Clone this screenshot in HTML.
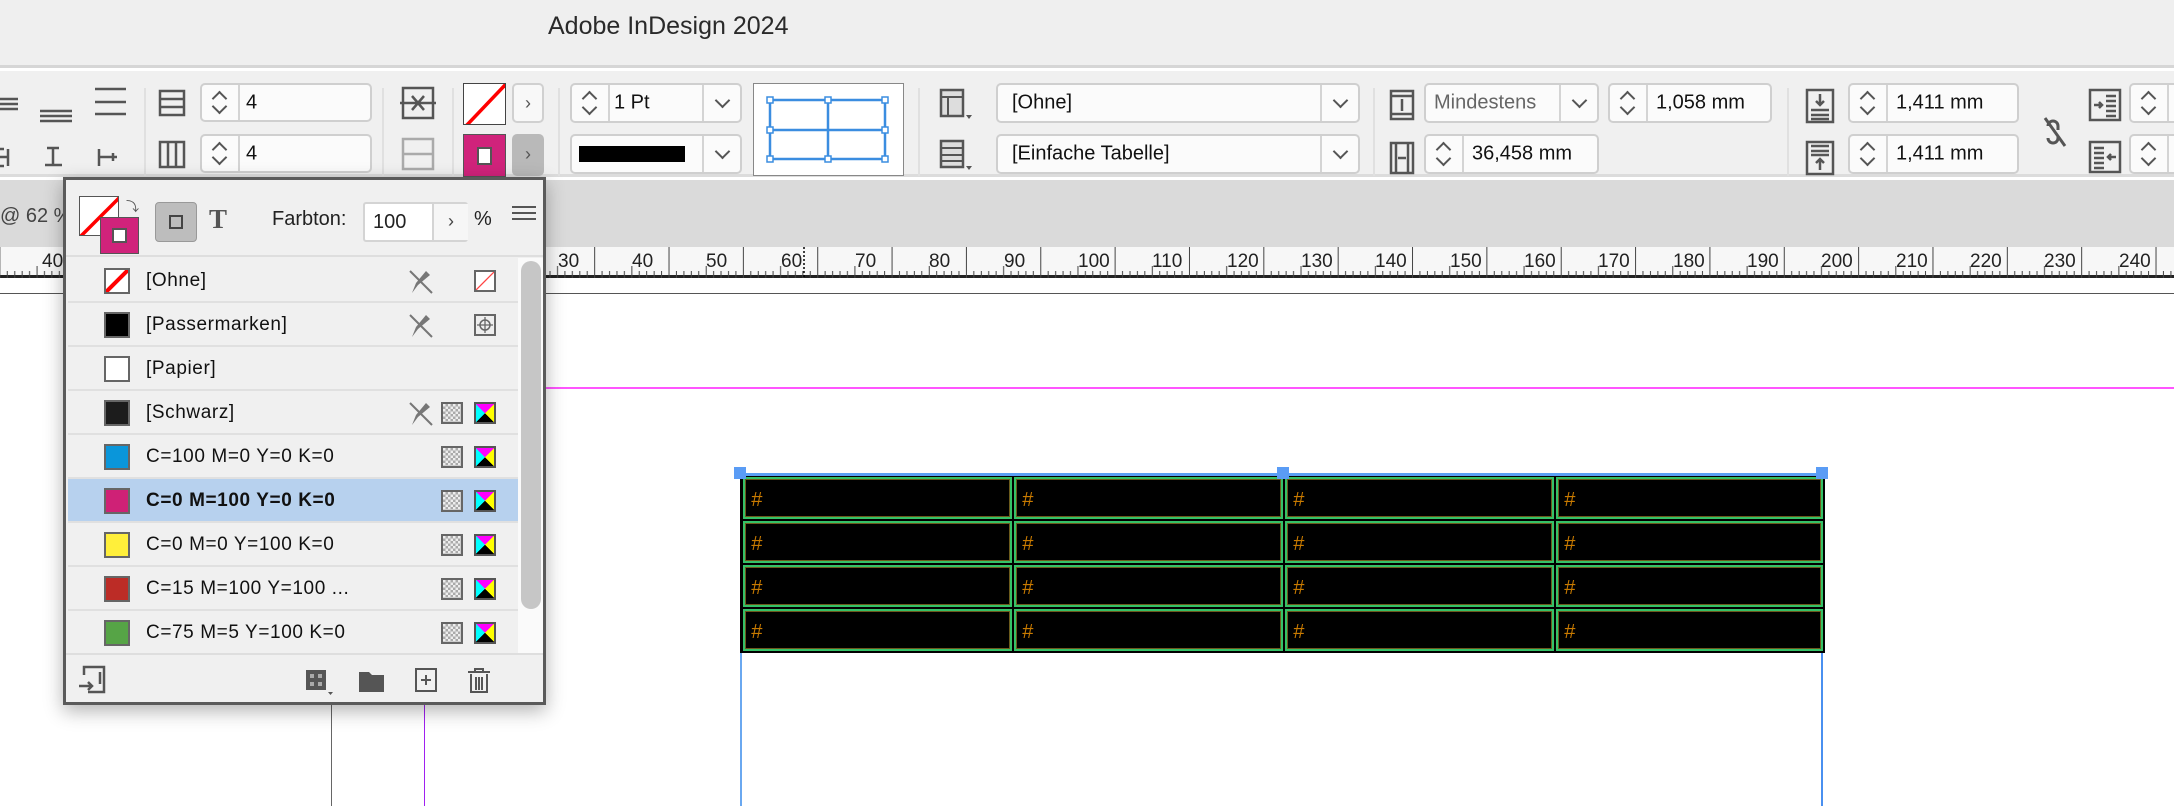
<!DOCTYPE html>
<html><head><meta charset="utf-8">
<style>
*{box-sizing:border-box;margin:0;padding:0}
body{width:2174px;height:806px;overflow:hidden;position:relative;background:#fff;font-family:"Liberation Sans",sans-serif;color:#222}
.a{position:absolute}
.fld{position:absolute;background:#fbfbfb;border:2px solid #cfcfcf;border-radius:5px;font-size:20px;color:#111}
.spin{position:absolute;left:0;top:0;bottom:0;width:38px;border-right:2px solid #d4d4d4}
.spin:before{content:"";position:absolute;left:12px;top:8px;width:9px;height:9px;border-left:2px solid #555;border-top:2px solid #555;transform:rotate(45deg)}
.spin:after{content:"";position:absolute;left:12px;bottom:8px;width:9px;height:9px;border-right:2px solid #555;border-bottom:2px solid #555;transform:rotate(45deg)}
.dd{position:absolute;right:0;top:0;bottom:0;width:38px;border-left:2px solid #d4d4d4}
.dd:after{content:"";position:absolute;left:13px;top:10px;width:9px;height:9px;border-right:2px solid #555;border-bottom:2px solid #555;transform:rotate(45deg)}
.txt{position:absolute;top:50%;transform:translateY(-50%)}
.sep{position:absolute;top:88px;width:2px;height:88px;background:#e0e0e0}
.row{position:absolute;left:2px;width:450px;height:44px;border-bottom:2px solid #e0e0e0;font-size:19px;color:#111}
.sw{position:absolute;left:36px;top:9px;width:26px;height:26px;border:2px solid #666}
.row .t{position:absolute;left:78px;top:11px;letter-spacing:0.6px}
.chk{position:absolute;left:373px;top:11px;width:22px;height:22px;border:2px solid #666;background:repeating-conic-gradient(#aaa 0 25%,#eee 0 50%) 0 0/5px 5px}
.cmyk{position:absolute;left:406px;top:11px;width:22px;height:22px;border:2px solid #555;background:conic-gradient(from -45deg,#f0f 0 25%,#ff0 0 50%,#000 0 75%,#0ff 0)}
.pen{position:absolute;left:340px;top:8px}
.cell{position:absolute;background:#000;border:2px solid #35c267;box-shadow:inset 0 0 0 1px #6b5a1c}
.cell span{position:absolute;left:6px;top:10px;color:#c87a00;font-size:20px;font-style:italic}
</style></head><body>
<div class="a" style="left:0;top:0;width:2174px;height:68px;background:#efefef;border-bottom:3px solid #d6d6d6"></div>
<div class="a" style="left:548px;top:12px;font-size:25px;color:#2a2a2a">Adobe InDesign 2024</div>
<div class="a" style="left:0;top:71px;width:2174px;height:106px;background:#f0f0f0;border-bottom:3px solid #dcdcdc"></div>
<div class="a" style="left:0;top:180px;width:2174px;height:67px;background:#dadada"></div>
<div class="a" style="left:0;top:205px;font-size:20px;color:#444">@ 62 %</div>

<svg class="a" style="left:0;top:80px" width="140" height="100">
<g stroke="#555" stroke-width="2.5" fill="none">
<path d="M0 19H18M0 24H18M0 29H18"/>
<path d="M40 31H72M40 36H72M40 41H72"/>
<path d="M95 9H126M95 22H126M95 34H126"/>
<path d="M0 77H8M8 69V86M0 69H4M0 86H4"/>
<path d="M53 68V85M45 85H62M47 68H59"/>
<path d="M99 69V86M99 77H117M113 73V81"/>
</g>
</svg>
<div class="sep" style="left:144px"></div>
<svg class="a" style="left:158px;top:88px" width="30" height="90">
<g stroke="#555" stroke-width="2.5" fill="none"><rect x="2" y="3" width="24" height="24"/><path d="M2 11H26M2 19H26"/>
<rect x="2" y="54" width="24" height="25"/><path d="M10 54V79M18 54V79"/></g></svg>
<div class="fld" style="left:200px;top:83px;width:172px;height:39px"><div class="spin"></div><div class="txt" style="left:44px">4</div></div>
<div class="fld" style="left:200px;top:134px;width:172px;height:39px"><div class="spin"></div><div class="txt" style="left:44px">4</div></div>
<div class="sep" style="left:382px"></div>
<svg class="a" style="left:400px;top:85px" width="36" height="90">
<g stroke="#555" stroke-width="2.5" fill="none"><rect x="3" y="3" width="30" height="30"/><path d="M0 18H36M12 11L24 25M24 11L12 25"/></g>
<g stroke="#aaa" stroke-width="2.5" fill="none"><rect x="3" y="54" width="30" height="30"/><path d="M3 69H33"/></g></svg>
<div class="sep" style="left:452px"></div>
<div class="a" style="left:463px;top:83px;width:43px;height:42px;background:#fff;border:1px solid #444;overflow:hidden"><svg width="43" height="42"><path d="M2 42L42 0" stroke="#f00" stroke-width="3.5"/></svg></div>
<div class="a" style="left:512px;top:83px;width:32px;height:40px;border:2px solid #d0d0d0;border-radius:5px;background:#f8f8f8;font-size:18px;text-align:center;line-height:36px;color:#555">&#x203A;</div>
<div class="a" style="left:463px;top:134px;width:43px;height:43px;background:#d0237b;border:1px solid #555"><div class="a" style="left:13px;top:12px;width:15px;height:18px;background:#fff;border:2px solid #555"></div></div>
<div class="a" style="left:512px;top:134px;width:32px;height:42px;border-radius:5px;background:#b9b9b9;font-size:18px;text-align:center;line-height:40px;color:#555">&#x203A;</div>
<div class="sep" style="left:558px"></div>
<div class="fld" style="left:570px;top:83px;width:172px;height:40px"><div class="spin"></div><div class="txt" style="left:42px">1 Pt</div><div class="dd"></div></div>
<div class="fld" style="left:570px;top:134px;width:172px;height:40px"><div class="a" style="left:7px;top:10px;width:106px;height:16px;background:#000"></div><div class="dd"></div></div>
<div class="a" style="left:753px;top:83px;width:151px;height:93px;background:#fff;border:1px solid #888"></div>
<svg class="a" style="left:753px;top:83px" width="151" height="93"><g stroke="#3b8de0" stroke-width="2.5" fill="none"><rect x="17" y="17" width="115" height="59"/><path d="M75 17V76M17 47H132"/></g>
<g fill="#fff" stroke="#3b8de0" stroke-width="1.5"><rect x="14" y="14" width="6" height="6"/><rect x="72" y="14" width="6" height="6"/><rect x="129" y="14" width="6" height="6"/><rect x="14" y="44" width="6" height="6"/><rect x="129" y="44" width="6" height="6"/><rect x="14" y="73" width="6" height="6"/><rect x="72" y="73" width="6" height="6"/><rect x="129" y="73" width="6" height="6"/></g></svg>
<div class="sep" style="left:918px"></div>
<svg class="a" style="left:938px;top:87px" width="36" height="90">
<g stroke="#555" stroke-width="2.5" fill="#ddd"><rect x="3" y="3" width="22" height="26"/><rect x="3" y="54" width="22" height="26"/></g>
<path d="M3 10H25M10 10V29M3 61H25M3 68H25M3 74H25" stroke="#555" stroke-width="2"/>
<path d="M28 28l6 0-3 4z M28 79l6 0-3 4z" fill="#555"/></svg>
<div class="fld" style="left:996px;top:83px;width:364px;height:40px"><div class="txt" style="left:14px">[Ohne]</div><div class="dd"></div></div>
<div class="fld" style="left:996px;top:134px;width:364px;height:40px"><div class="txt" style="left:14px">[Einfache Tabelle]</div><div class="dd"></div></div>
<div class="sep" style="left:1373px"></div>
<svg class="a" style="left:1388px;top:88px" width="28" height="90"><g stroke="#555" stroke-width="2.5" fill="none"><rect x="3" y="3" width="22" height="28"/><path d="M3 8H25M3 26H25M14 11V23"/><rect x="3" y="55" width="22" height="30"/><path d="M8 55V85M20 55V85M10 70H18"/></g></svg>
<div class="fld" style="left:1424px;top:83px;width:175px;height:40px;color:#666"><div class="txt" style="left:8px">Mindestens</div><div class="dd"></div></div>
<div class="fld" style="left:1608px;top:83px;width:164px;height:40px"><div class="spin"></div><div class="txt" style="left:46px">1,058 mm</div></div>
<div class="fld" style="left:1424px;top:134px;width:175px;height:40px"><div class="spin"></div><div class="txt" style="left:46px">36,458 mm</div></div>
<div class="sep" style="left:1787px"></div>
<svg class="a" style="left:1805px;top:88px" width="30" height="90"><g stroke="#555" stroke-width="2.5" fill="none"><rect x="2" y="2" width="26" height="32"/><path d="M6 22H24M6 27H24M6 31H24M15 6V17M11 13L15 17L19 13"/><rect x="2" y="54" width="26" height="32"/><path d="M6 58H24M6 63H24M6 67H24M15 82V71M11 75L15 71L19 75"/></g></svg>
<div class="fld" style="left:1848px;top:83px;width:171px;height:40px"><div class="spin"></div><div class="txt" style="left:46px">1,411 mm</div></div>
<div class="fld" style="left:1848px;top:134px;width:171px;height:40px"><div class="spin"></div><div class="txt" style="left:46px">1,411 mm</div></div>
<svg class="a" style="left:2040px;top:112px" width="30" height="40"><g stroke="#555" stroke-width="3" fill="none"><path d="M8 14a5 5 0 0 1 10 0v4M18 24v2a5 5 0 0 1-10 0M5 6L25 34"/></g></svg>
<svg class="a" style="left:2088px;top:88px" width="36" height="90"><g stroke="#555" stroke-width="2.5" fill="none"><rect x="2" y="2" width="30" height="30"/><path d="M18 8H28M18 13H28M18 18H28M18 23H28M18 28H28M6 17H14M11 14L14 17L11 20"/><rect x="2" y="54" width="30" height="30"/><path d="M6 60H16M6 65H16M6 70H16M6 75H16M6 80H16M20 69H28M23 66L20 69L23 72"/></g></svg>
<div class="fld" style="left:2129px;top:83px;width:60px;height:40px"><div class="spin"></div></div>
<div class="fld" style="left:2129px;top:134px;width:60px;height:40px"><div class="spin"></div></div>

<div class="a" style="left:0;top:247px;width:2174px;height:31px;background:#f7f7f7;border-bottom:3px solid #222"></div>
<svg class="a" style="left:0;top:247px" width="2174" height="31">
<defs><pattern id="tk" patternUnits="userSpaceOnUse" x="-0.13" y="0" width="74.35" height="31">
<path d="M0.5 0V31M7.9 24V31M15.4 24V31M22.8 24V31M30.2 24V31M37.7 19V31M45.1 24V31M52.5 24V31M60 24V31M67.4 24V31" stroke="#444" stroke-width="1"/></pattern></defs>
<rect x="0" y="0" width="2174" height="31" fill="url(#tk)" transform="translate(-0.5 0)"/>
<g font-size="19" fill="#222" font-family="Liberation Sans">
<text x="42" y="20">40</text>
<text x="558" y="20">30</text><text x="632" y="20">40</text><text x="706" y="20">50</text><text x="781" y="20">60</text><text x="855" y="20">70</text><text x="929" y="20">80</text><text x="1004" y="20">90</text><text x="1078" y="20">100</text><text x="1152" y="20">110</text><text x="1227" y="20">120</text><text x="1301" y="20">130</text><text x="1375" y="20">140</text><text x="1450" y="20">150</text><text x="1524" y="20">160</text><text x="1598" y="20">170</text><text x="1673" y="20">180</text><text x="1747" y="20">190</text><text x="1821" y="20">200</text><text x="1896" y="20">210</text><text x="1970" y="20">220</text><text x="2044" y="20">230</text><text x="2119" y="20">240</text>
</g>
<path d="M804 0V31" stroke="#000" stroke-dasharray="2 2" stroke-width="1.5"/>
</svg>
<div class="a" style="left:0;top:293px;width:2174px;height:1px;background:#555"></div>
<div class="a" style="left:545px;top:387px;width:1629px;height:2px;background:#f5f"></div>
<div class="a" style="left:331px;top:700px;width:1px;height:106px;background:#666"></div>
<div class="a" style="left:424px;top:700px;width:1px;height:106px;background:#a020f0"></div>
<div class="a" style="left:740px;top:473px;width:2px;height:333px;background:#6aa8f0"></div>
<div class="a" style="left:1821px;top:473px;width:2px;height:333px;background:#4a90f0"></div>
<div class="a" style="left:740px;top:473px;width:1085px;height:180px;background:#000;border-top:3px solid #5aa0f5"></div>
<div class="cell" style="left:743px;top:477px;width:269px;height:42px"><span>#</span></div>
<div class="cell" style="left:1014px;top:477px;width:269px;height:42px"><span>#</span></div>
<div class="cell" style="left:1285px;top:477px;width:269px;height:42px"><span>#</span></div>
<div class="cell" style="left:1556px;top:477px;width:267px;height:42px"><span>#</span></div>
<div class="cell" style="left:743px;top:521px;width:269px;height:42px"><span>#</span></div>
<div class="cell" style="left:1014px;top:521px;width:269px;height:42px"><span>#</span></div>
<div class="cell" style="left:1285px;top:521px;width:269px;height:42px"><span>#</span></div>
<div class="cell" style="left:1556px;top:521px;width:267px;height:42px"><span>#</span></div>
<div class="cell" style="left:743px;top:565px;width:269px;height:42px"><span>#</span></div>
<div class="cell" style="left:1014px;top:565px;width:269px;height:42px"><span>#</span></div>
<div class="cell" style="left:1285px;top:565px;width:269px;height:42px"><span>#</span></div>
<div class="cell" style="left:1556px;top:565px;width:267px;height:42px"><span>#</span></div>
<div class="cell" style="left:743px;top:609px;width:269px;height:42px"><span>#</span></div>
<div class="cell" style="left:1014px;top:609px;width:269px;height:42px"><span>#</span></div>
<div class="cell" style="left:1285px;top:609px;width:269px;height:42px"><span>#</span></div>
<div class="cell" style="left:1556px;top:609px;width:267px;height:42px"><span>#</span></div>
<div class="a" style="left:734px;top:467px;width:12px;height:12px;background:#5a9cf5"></div>
<div class="a" style="left:1277px;top:467px;width:12px;height:12px;background:#5a9cf5"></div>
<div class="a" style="left:1816px;top:467px;width:12px;height:12px;background:#5a9cf5"></div>

<div class="a" style="left:63px;top:177px;width:483px;height:528px;background:#f0f0f0;border:3px solid #5a5a5a;box-shadow:0 6px 18px rgba(0,0,0,.3);overflow:hidden">
 <div class="a" style="left:13px;top:16px;width:40px;height:40px;background:#fff;border:1px solid #555;overflow:hidden"><svg width="40" height="40"><path d="M0 40L40 0" stroke="#f00" stroke-width="3.5"/></svg></div>
 <div class="a" style="left:34px;top:37px;width:39px;height:37px;background:#d0237b;border:1px solid #555"><div class="a" style="left:11px;top:10px;width:15px;height:15px;background:#fff;border:2px solid #555"></div></div>
 <div class="a" style="left:60px;top:16px;font-size:13px;color:#555">&#x2935;</div>
 <div class="a" style="left:89px;top:22px;width:42px;height:40px;background:#bdbdbd;border:1px solid #999;border-radius:4px"><div class="a" style="left:13px;top:12px;width:14px;height:14px;border:2px solid #444"></div></div>
 <div class="a" style="left:143px;top:24px;font-family:'Liberation Serif',serif;font-size:27px;font-weight:bold;color:#555">T</div>
 <div class="a" style="left:206px;top:28px;font-size:20px;color:#222">Farbton:</div>
 <div class="a" style="left:297px;top:22px;width:105px;height:40px;background:#fff;border:2px solid #d4d4d4;border-radius:3px"><div class="a" style="left:8px;top:7px;font-size:20px">100</div><div class="a" style="left:67px;top:0;width:36px;height:36px;border-left:2px solid #d4d4d4;background:#f6f6f6;text-align:center;font-size:18px;line-height:34px;color:#444">&#x203A;</div></div>
 <div class="a" style="left:408px;top:28px;font-size:20px">%</div>
 <div class="a" style="left:446px;top:26px;width:24px;height:14px;border-top:2px solid #555;border-bottom:2px solid #555"><div style="margin-top:4px;height:2px;background:#555"></div></div>
 <div class="a" style="left:0;top:75px;width:477px;height:2px;background:#dedede"></div>
 <div class="row" style="top:79px"><div class="sw" style="background:#fff;overflow:hidden"><svg width="22" height="22"><path d="M0 22L22 0" stroke="#f00" stroke-width="4"/></svg></div><div class="t">[Ohne]</div>
  <svg class="pen" width="26" height="28"><path d="M4 26l4-10 10-12 4 4-12 10z" fill="#777"/><path d="M2 4L24 26" stroke="#777" stroke-width="2"/></svg>
  <div class="a" style="left:406px;top:11px;width:22px;height:22px;border:2px solid #666;background:#fff;overflow:hidden"><svg width="18" height="18"><path d="M0 18L18 0" stroke="#f44" stroke-width="1.3"/></svg></div></div>
 <div class="row" style="top:123px"><div class="sw" style="background:#000"></div><div class="t">[Passermarken]</div>
  <svg class="pen" width="26" height="28"><path d="M4 26l4-10 10-12 4 4-12 10z" fill="#777"/><path d="M2 4L24 26" stroke="#777" stroke-width="2"/></svg>
  <svg class="a" style="left:406px;top:11px" width="22" height="22"><rect x="1" y="1" width="20" height="20" fill="#eee" stroke="#666" stroke-width="2"/><circle cx="11" cy="11" r="5" fill="none" stroke="#666" stroke-width="1.5"/><path d="M11 3V19M3 11H19" stroke="#666" stroke-width="1.3"/></svg></div>
 <div class="row" style="top:167px"><div class="sw" style="background:#fff"></div><div class="t">[Papier]</div></div>
 <div class="row" style="top:211px"><div class="sw" style="background:#1c1c1c"></div><div class="t">[Schwarz]</div>
  <svg class="pen" width="26" height="28"><path d="M4 26l4-10 10-12 4 4-12 10z" fill="#777"/><path d="M2 4L24 26" stroke="#777" stroke-width="2"/></svg>
  <div class="chk"></div><div class="cmyk"></div></div>
 <div class="row" style="top:255px"><div class="sw" style="background:#0a96da"></div><div class="t">C=100 M=0 Y=0 K=0</div><div class="chk"></div><div class="cmyk"></div></div>
 <div class="row" style="top:299px;background:#b7d1ee"><div class="sw" style="background:#cf2176"></div><div class="t" style="font-weight:bold">C=0 M=100 Y=0 K=0</div><div class="chk"></div><div class="cmyk"></div></div>
 <div class="row" style="top:343px"><div class="sw" style="background:#ffef3a"></div><div class="t">C=0 M=0 Y=100 K=0</div><div class="chk"></div><div class="cmyk"></div></div>
 <div class="row" style="top:387px"><div class="sw" style="background:#bc2c26"></div><div class="t">C=15 M=100 Y=100 ...</div><div class="chk"></div><div class="cmyk"></div></div>
 <div class="row" style="top:431px"><div class="sw" style="background:#56a446"></div><div class="t">C=75 M=5 Y=100 K=0</div><div class="chk"></div><div class="cmyk"></div></div>
 <div class="a" style="left:452px;top:78px;width:25px;height:395px;background:#fafafa"></div>
 <div class="a" style="left:455px;top:81px;width:20px;height:348px;background:#c6c6c6;border-radius:10px"></div>
 <div class="a" style="left:0;top:473px;width:477px;height:2px;background:#dedede"></div>
 <svg class="a" style="left:12px;top:484px" width="460" height="34">
  <g stroke="#555" stroke-width="2.5" fill="none"><path d="M6 11V3H26V28H10M22 8V20"/><path d="M1 22H14M10 18L14 22L10 26"/></g>
  <rect x="228" y="6" width="20" height="20" fill="#555"/><path d="M232 10h4v4h-4zM240 10h4v4h-4zM232 18h4v4h-4zM240 18h4v4h-4z" fill="#aaa"/><path d="M250 28h5l-2.5 3z" fill="#555"/>
  <path d="M281 8h10l3 3h12v17h-25z" fill="#555"/>
  <rect x="338" y="5" width="20" height="22" fill="none" stroke="#555" stroke-width="2"/><path d="M348 11V21M343 16H353" stroke="#555" stroke-width="2"/>
  <path d="M390 8h22M397 8V5h8v3M393 10v18h16V10M398 13v13M401 13v13M404 13v13" fill="none" stroke="#555" stroke-width="2"/>
 </svg>
</div>
</body></html>
